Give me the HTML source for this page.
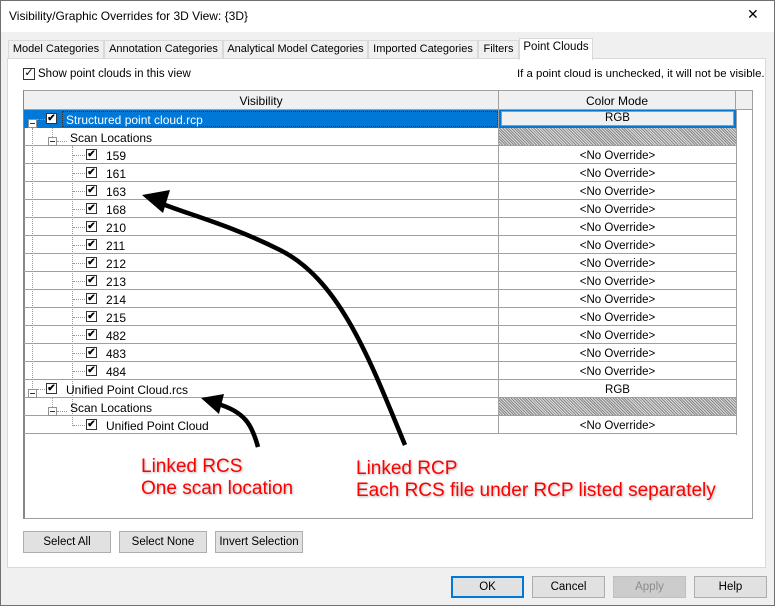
<!DOCTYPE html>
<html><head><style>
*{margin:0;padding:0;box-sizing:border-box}
body{width:775px;height:606px;background:#f0f0f0;font:12px "Liberation Sans",sans-serif;color:#000;position:relative;overflow:hidden}
.a{position:absolute}
.tab{position:absolute;top:40px;height:19px;border:1px solid #d9d9d9;border-bottom:none;background:#f0f0f0;text-align:center;line-height:17px;font-size:11px;white-space:nowrap;overflow:hidden}
.btn{position:absolute;height:22px;border:1px solid #adadad;background:#e1e1e1;text-align:center;line-height:20px;font-size:11.5px}
.row{position:absolute;left:24px;width:712px;height:18px;border-bottom:1px solid #a0a0a0;font-size:12px;line-height:17px}
.row > .a{top:2px}
.cm{position:absolute;left:474px;width:238px;top:0;height:17px;border-left:1px solid #a0a0a0;text-align:center;font-size:11.5px;padding-top:2px}
.cb{position:absolute;width:11px;height:11px;border:1px solid #333;background:#fff;font-size:10px;line-height:9px;text-align:center;font-weight:bold}
.row > .cb{top:3px}
.mb{position:absolute;width:9px;height:9px;border:1px solid #919191;background:#fff}
.mb:after{content:"";position:absolute;left:1px;top:3px;width:5px;height:1px;background:#333}
.dv{position:absolute;border-left:1px dotted #999}
.dh{position:absolute;border-top:1px dotted #999}
.hatch{background:repeating-linear-gradient(45deg,#888 0 1px,#ddd 1px 2px)}
.red{position:absolute;color:#f00;font-size:19px;text-shadow:1px 1px 2px rgba(0,0,0,.3)}
</style></head><body>
<div class="a" style="left:0;top:0;width:775px;height:32px;background:#fff"></div>
<div class="a" style="left:0;top:0;width:775px;height:606px;border:1px solid #707070;pointer-events:none"></div>
<div class="a" style="left:9px;top:9px;font-size:12px">Visibility/Graphic Overrides for 3D View: {3D}</div>
<div class="a" style="left:747px;top:6px;font-size:14px">✕</div>

<div class="tab" style="left:8px;width:96px">Model Categories</div>
<div class="tab" style="left:104px;width:119px">Annotation Categories</div>
<div class="tab" style="left:223px;width:145px">Analytical Model Categories</div>
<div class="tab" style="left:368px;width:110px">Imported Categories</div>
<div class="tab" style="left:478px;width:41px">Filters</div>
<div class="a" style="left:7px;top:58px;width:759px;height:510px;background:#fff;border:1px solid #d9d9d9"></div>
<div class="tab" style="left:519px;top:38px;width:74px;height:22px;background:#fff;border-color:#d9d9d9;z-index:2;font-size:11.5px">Point Clouds</div>

<div class="cb" style="left:23px;top:68px;border-color:#333;font-weight:normal;font-size:11px;width:12px;height:12px">✓</div>
<div class="a" style="left:38px;top:68px;font-size:11.5px">Show point clouds in this view</div>
<div class="a" style="left:517px;top:68px;font-size:11.4px">If a point cloud is unchecked, it will not be visible.</div>

<div class="a" style="left:23px;top:90px;width:730px;height:429px;border:1px solid #a0a0a0;border-left:2px solid #888;background:#fff"></div>
<div class="a" style="left:24px;top:91px;width:728px;height:19px;background:#f0f0f0;border-bottom:1px solid #a0a0a0"></div>
<div class="a" style="left:24px;top:94px;width:474px;text-align:center">Visibility</div>
<div class="a" style="left:498px;top:91px;width:238px;height:19px;border-left:1px solid #a0a0a0;border-right:1px solid #a0a0a0;text-align:center;line-height:20px">Color Mode</div>
<div class="a" style="left:736px;top:110px;width:1px;height:325px;background:#a0a0a0"></div>

<div class="row" style="top:110px;background:#fff">
 <div class="a" style="left:0;top:0;width:474px;height:18px;background:#0078d7"></div>
 <div class="a" style="left:38px;top:1px;width:436px;height:16px;border:1px dotted #333"></div>
 <div class="a" style="left:42px;color:#fff">Structured point cloud.rcp</div>
 <div class="cb" style="left:22px">✔</div>
 <div class="cm" style="background:#0078d7;top:0;height:18px;padding:0"><div style="margin:1px 2px;height:15px;background:#f0f0f0;border:1px solid #999;line-height:13px">RGB</div></div>
</div>
<div class="mb" style="left:28px;top:119px"></div>
<div class="dv" style="left:32px;top:128px;height:262px"></div>

<div class="row" style="top:128px"><div class="a" style="left:46px">Scan Locations</div><div class="cm hatch"></div></div>
<div class="mb" style="left:48px;top:137px"></div>
<div class="dh" style="left:57px;top:141px;width:10px"></div>
<div class="dv" style="left:52px;top:128px;height:9px"></div>
<div class="dv" style="left:72px;top:146px;height:280px"></div>

<div class="row" style="top:146px"><div class="dh" style="left:49px;top:9px;width:12px"></div><div class="cb" style="left:62px">✔</div><div class="a" style="left:82px">159</div><div class="cm">&lt;No Override&gt;</div></div>
<div class="row" style="top:164px"><div class="dh" style="left:49px;top:9px;width:12px"></div><div class="cb" style="left:62px">✔</div><div class="a" style="left:82px">161</div><div class="cm">&lt;No Override&gt;</div></div>
<div class="row" style="top:182px"><div class="dh" style="left:49px;top:9px;width:12px"></div><div class="cb" style="left:62px">✔</div><div class="a" style="left:82px">163</div><div class="cm">&lt;No Override&gt;</div></div>
<div class="row" style="top:200px"><div class="dh" style="left:49px;top:9px;width:12px"></div><div class="cb" style="left:62px">✔</div><div class="a" style="left:82px">168</div><div class="cm">&lt;No Override&gt;</div></div>
<div class="row" style="top:218px"><div class="dh" style="left:49px;top:9px;width:12px"></div><div class="cb" style="left:62px">✔</div><div class="a" style="left:82px">210</div><div class="cm">&lt;No Override&gt;</div></div>
<div class="row" style="top:236px"><div class="dh" style="left:49px;top:9px;width:12px"></div><div class="cb" style="left:62px">✔</div><div class="a" style="left:82px">211</div><div class="cm">&lt;No Override&gt;</div></div>
<div class="row" style="top:254px"><div class="dh" style="left:49px;top:9px;width:12px"></div><div class="cb" style="left:62px">✔</div><div class="a" style="left:82px">212</div><div class="cm">&lt;No Override&gt;</div></div>
<div class="row" style="top:272px"><div class="dh" style="left:49px;top:9px;width:12px"></div><div class="cb" style="left:62px">✔</div><div class="a" style="left:82px">213</div><div class="cm">&lt;No Override&gt;</div></div>
<div class="row" style="top:290px"><div class="dh" style="left:49px;top:9px;width:12px"></div><div class="cb" style="left:62px">✔</div><div class="a" style="left:82px">214</div><div class="cm">&lt;No Override&gt;</div></div>
<div class="row" style="top:308px"><div class="dh" style="left:49px;top:9px;width:12px"></div><div class="cb" style="left:62px">✔</div><div class="a" style="left:82px">215</div><div class="cm">&lt;No Override&gt;</div></div>
<div class="row" style="top:326px"><div class="dh" style="left:49px;top:9px;width:12px"></div><div class="cb" style="left:62px">✔</div><div class="a" style="left:82px">482</div><div class="cm">&lt;No Override&gt;</div></div>
<div class="row" style="top:344px"><div class="dh" style="left:49px;top:9px;width:12px"></div><div class="cb" style="left:62px">✔</div><div class="a" style="left:82px">483</div><div class="cm">&lt;No Override&gt;</div></div>
<div class="row" style="top:362px"><div class="dh" style="left:49px;top:9px;width:12px"></div><div class="cb" style="left:62px">✔</div><div class="a" style="left:82px">484</div><div class="cm">&lt;No Override&gt;</div></div>

<div class="row" style="top:380px"><div class="dh" style="left:13px;top:9px;width:8px"></div><div class="cb" style="left:22px">✔</div><div class="a" style="left:42px">Unified Point Cloud.rcs</div><div class="cm">RGB</div></div>
<div class="mb" style="left:28px;top:389px"></div>
<div class="row" style="top:398px"><div class="a" style="left:46px">Scan Locations</div><div class="cm hatch"></div></div>
<div class="mb" style="left:48px;top:407px"></div>
<div class="dh" style="left:57px;top:411px;width:10px"></div>
<div class="dv" style="left:52px;top:398px;height:9px"></div>
<div class="row" style="top:416px"><div class="dh" style="left:49px;top:9px;width:12px"></div><div class="cb" style="left:62px">✔</div><div class="a" style="left:82px">Unified Point Cloud</div><div class="cm">&lt;No Override&gt;</div></div>
<div class="dh" style="left:37px;top:119px;width:8px"></div>

<svg class="a" style="left:0;top:0" width="775" height="606">
<path d="M405 445 C370 360 340 280 280 250 C230 225 190 215 160 203" fill="none" stroke="#000" stroke-width="4.5"/>
<polygon points="142,195 170,190 163,213" fill="#000"/>
<path d="M258 447 C252 425 245 412 218 404" fill="none" stroke="#000" stroke-width="4.5"/>
<polygon points="201,398 224,394 219,414" fill="#000"/>
</svg>
<div class="red" style="left:141px;top:456px">Linked RCS</div>
<div class="red" style="left:141px;top:478px">One scan location</div>
<div class="red" style="left:356px;top:458px">Linked RCP</div>
<div class="red" style="left:356px;top:480px">Each RCS file under RCP listed separately</div>

<div class="btn" style="left:23px;top:531px;width:88px">Select All</div>
<div class="btn" style="left:119px;top:531px;width:88px">Select None</div>
<div class="btn" style="left:215px;top:531px;width:88px">Invert Selection</div>

<div class="btn" style="left:451px;top:576px;width:73px;border:2px solid #0078d7;line-height:18px">OK</div>
<div class="btn" style="left:532px;top:576px;width:73px">Cancel</div>
<div class="btn" style="left:613px;top:576px;width:73px;background:#ccc;border-color:#bfbfbf;color:#8c8c8c">Apply</div>
<div class="btn" style="left:694px;top:576px;width:73px">Help</div>
</body></html>
